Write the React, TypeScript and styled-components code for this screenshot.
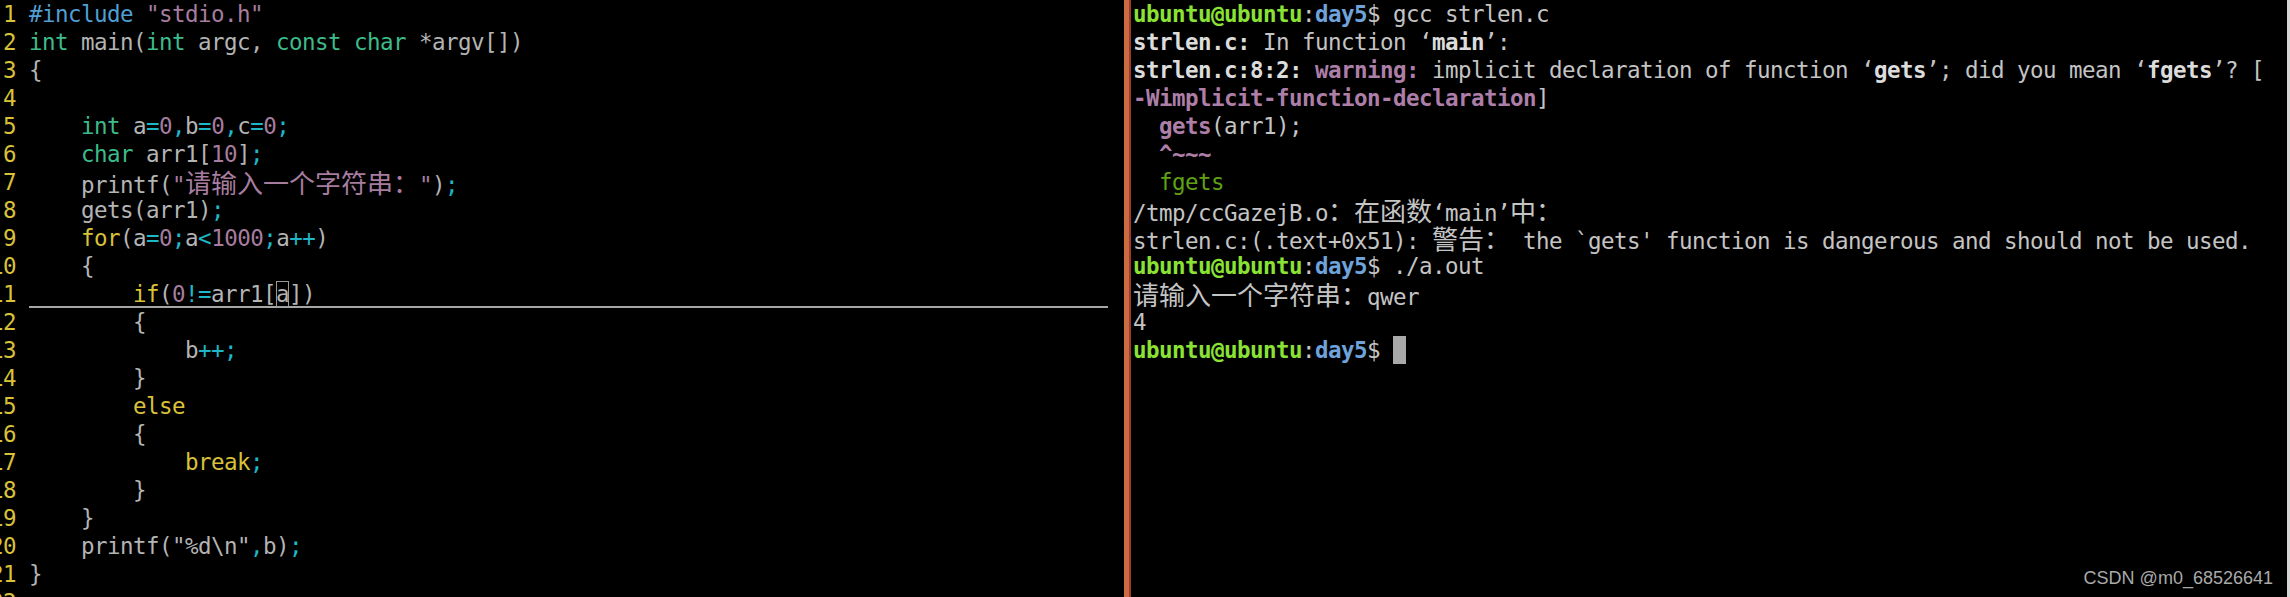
import React from "react";
import styled, { createGlobalStyle, css } from "styled-components";

const GlobalStyle = createGlobalStyle`
  html, body {
    margin: 0;
    padding: 0;
    background: #000;
    overflow: hidden;
  }
`;

type Kind = "n" | "k" | "t" | "s" | "p" | "o" | "cur";
type Tok = [string, Kind?];

const codeColors: Record<string, string> = {
  n: "#b4b4b4",
  k: "#d9c23a",
  t: "#3dbb8a",
  s: "#a77d9f",
  p: "#4f9fd3",
  o: "#1fb7c7",
  cur: "#b4b4b4",
};

// one terminal cell is 13px wide: a slightly bigger DejaVu with the
// spacing pulled in gets closer to the tall Ubuntu Mono glyphs
const Screen = styled.div`
  position: relative;
  display: flex;
  width: 2290px;
  height: 597px;
  overflow: hidden;
  background: #000;
  font-family: "DejaVu Sans Mono", "Liberation Mono", monospace;
  font-size: 22.5px;
  letter-spacing: -0.546px;
`;

const Editor = styled.div`
  flex: none;
  width: 1124px;
  padding-right: 16px;
  box-sizing: border-box;
  display: flex;
  flex-direction: column;
`;

const CodeLine = styled.div`
  display: grid;
  grid-template-columns: 29px 1fr;
  height: 28px;
  line-height: 28px;
  white-space: pre;
`;

const LineNo = styled.span`
  text-align: right;
  padding-right: 13px;
  color: #d9c23a;
  overflow: visible;
  direction: rtl;
`;

const CodeText = styled.span<{ $current?: boolean }>`
  box-sizing: border-box;
  height: 28px;
  ${(p) =>
    p.$current &&
    css`
      border-bottom: 2px solid #a6a6a6;
    `}
`;

const CodeTok = styled.span<{ $kind: string }>`
  color: ${(p) => codeColors[p.$kind]};
  ${(p) =>
    p.$kind === "cur" &&
    css`
      outline: 1px solid #9a9a9a;
      outline-offset: -1px;
    `}
`;

const Wide = styled.span`
  font-family: "Noto Sans CJK SC", sans-serif;
  font-size: 26px;
  letter-spacing: 0;
`;

const Divider = styled.div`
  flex: none;
  width: 7px;
  background: linear-gradient(to right, #cc6a40 0 5px, #9e3a2c 5px);
`;

const Terminal = styled.div`
  flex: 1;
  padding-left: 2px;
  display: flex;
  flex-direction: column;
`;

const TermRow = styled.div`
  height: 28px;
  line-height: 28px;
  white-space: pre;
  color: #c4c4c4;
`;

const termColors: Record<string, string> = {
  n: "#c4c4c4",
  w: "#dcdcdc",
  g: "#8ae234",
  b: "#6fa3dc",
  m: "#ad7fa8",
  f: "#5fa014",
};

const T = styled.span<{ $c?: string; $b?: boolean }>`
  color: ${(p) => termColors[p.$c || "n"]};
  font-weight: ${(p) => (p.$b ? 700 : 400)};
`;

const Block = styled.span`
  display: inline-block;
  width: 13px;
  height: 28px;
  vertical-align: top;
  background: #a9a9a9;
`;

const Edge = styled.div`
  flex: none;
  width: 3px;
  background: #d6d6d6;
`;

const Watermark = styled.div`
  position: absolute;
  right: 17px;
  bottom: 8px;
  font-family: "Liberation Sans", Arial, sans-serif;
  font-size: 18px;
  letter-spacing: 0;
  color: #a9a9a9;
`;

function withWide(text: string) {
  const parts = text.split(/([\u3000-\u9fff\uff00-\uffef]+)/);
  return parts.map((part, i) =>
    /[\u3000-\u9fff\uff00-\uffef]/.test(part) ? <Wide key={i}>{part}</Wide> : part
  );
}

const code: Tok[][] = [
  [["#include", "p"], [" "], ['"stdio.h"', "s"]],
  [["int", "t"], [" main("], ["int", "t"], [" argc, "], ["const", "t"], [" "], ["char", "t"], [" *argv[])"]],
  [["{"]],
  [],
  [["    "], ["int", "t"], [" a"], ["=", "o"], ["0", "s"], [",", "o"], ["b"], ["=", "o"], ["0", "s"], [",", "o"], ["c"], ["=", "o"], ["0", "s"], [";", "o"]],
  [["    "], ["char", "t"], [" arr1["], ["10", "s"], ["]"], [";", "o"]],
  [["    printf("], ['"请输入一个字符串："', "s"], [")"], [";", "o"]],
  [["    gets(arr1)"], [";", "o"]],
  [["    "], ["for", "k"], ["(a"], ["=", "o"], ["0", "s"], [";", "o"], ["a"], ["<", "o"], ["1000", "s"], [";", "o"], ["a"], ["++", "o"], [")"]],
  [["    {"]],
  [["        "], ["if", "k"], ["("], ["0", "s"], ["!=", "o"], ["arr1["], ["a", "cur"], ["])"]],
  [["        {"]],
  [["            b"], ["++", "o"], [";", "o"]],
  [["        }"]],
  [["        "], ["else", "k"]],
  [["        {"]],
  [["            "], ["break", "k"], [";", "o"]],
  [["        }"]],
  [["    }"]],
  [["    printf("], ['"%d\\n"'], [",", "o"], ["b)"], [";", "o"]],
  [["}"]],
  [],
];

type Seg = [string, string?, boolean?];

const prompt: Seg[] = [
  ["ubuntu@ubuntu", "g", true],
  [":"],
  ["day5", "b", true],
  ["$ "],
];

const term: Seg[][] = [
  [...prompt, ["gcc strlen.c"]],
  [["strlen.c:", "w", true], [" In function ‘"], ["main", "w", true], ["’:"]],
  [
    ["strlen.c:8:2:", "w", true],
    [" "],
    ["warning:", "m", true],
    [" implicit declaration of function ‘"],
    ["gets", "w", true],
    ["’; did you mean ‘"],
    ["fgets", "w", true],
    ["’? ["],
  ],
  [["-Wimplicit-function-declaration", "m", true], ["]"]],
  [["  "], ["gets", "m", true], ["(arr1);"]],
  [["  "], ["^~~~", "m", true]],
  [["  "], ["fgets", "f"]],
  [["/tmp/ccGazejB.o：在函数‘main’中："]],
  [["strlen.c:(.text+0x51): 警告： the `gets' function is dangerous and should not be used."]],
  [...prompt, ["./a.out"]],
  [["请输入一个字符串：qwer"]],
  [["4"]],
  [...prompt],
];

export default function App() {
  return (
    <>
      <GlobalStyle />
      <Screen>
        <Editor>
          {code.map((line, i) => (
            <CodeLine key={i}>
              <LineNo>{i + 1}</LineNo>
              <CodeText $current={i === 10}>
                {line.map(([text, kind = "n"], j) => (
                  <CodeTok key={j} $kind={kind}>
                    {withWide(text)}
                  </CodeTok>
                ))}
              </CodeText>
            </CodeLine>
          ))}
        </Editor>
        <Divider />
        <Terminal>
          {term.map((row, i) => (
            <TermRow key={i}>
              {row.map(([text, c, b], j) => (
                <T key={j} $c={c} $b={b}>
                  {withWide(text)}
                </T>
              ))}
              {i === term.length - 1 && <Block />}
            </TermRow>
          ))}
        </Terminal>
        <Edge />
        <Watermark>CSDN @m0_68526641</Watermark>
      </Screen>
    </>
  );
}
